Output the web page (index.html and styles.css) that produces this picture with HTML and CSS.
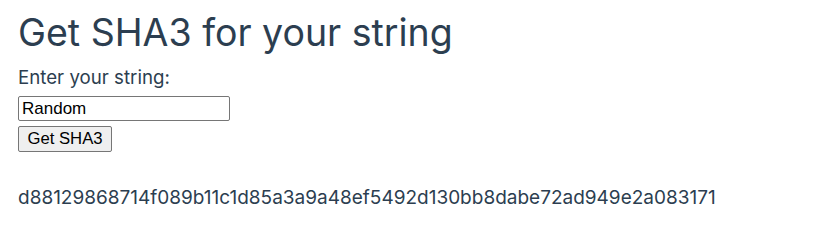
FILE: index.html
```html
<!DOCTYPE html>
<html lang="en">
<head>
    <meta charset="UTF-8" />
    <meta name="viewport" content="width=device-width, initial-scale=1.0"/>
    <title>SHA3</title>
    <link rel="stylesheet" href="styles.css">
</head>
<body>
<div class="app">
    <h1>Get SHA3 for your string</h1>
    <form id="shaForm">
        <label for="text">Enter your string:</label>
        <input type="text" id="text" name="text" value="Random">
        <button type="submit" class="btn">Get SHA3</button>
    </form>
    <p class="result">d88129868714f089b11c1d85a3a9a48ef5492d130bb8dabe72ad949e2a083171</p>
</div>
</body>
</html>
```

FILE: styles.css
```css
body {
  margin: 0;
  font-family: Inter, "Noto Sans", sans-serif;
  color: #2c3e50;
  background: #fff;
}

.app {
  padding: 8px 18px;
}

h1 {
  font-size: 37.5px;
  font-weight: 400;
  margin: 3px 0 11px;
  line-height: 44px;
}

form label {
  display: block;
  font-size: 18.7px;
  line-height: 24px;
  margin-bottom: 6px;
}

form input {
  display: block;
  box-sizing: border-box;
  width: 212px;
  height: 25px;
  padding: 1px 3px;
  font-family: Arial, "Liberation Sans", sans-serif;
  font-size: 17px;
  border: 1px solid #767676;
  border-radius: 2px;
  color: #000;
  margin: 0 0 5px;
}

.btn {
  display: block;
  box-sizing: border-box;
  width: 94px;
  height: 26px;
  font-family: Arial, "Liberation Sans", sans-serif;
  font-size: 16.7px;
  padding: 2px 6px;
  background: #efefef;
  border: 1px solid #767676;
  border-radius: 2px;
  color: #000;
}

.result {
  font-size: 19px;
  margin: 34px 0 0;
}
```
